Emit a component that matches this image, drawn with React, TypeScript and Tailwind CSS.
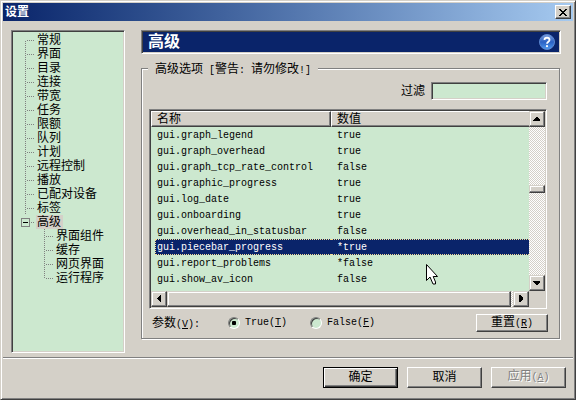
import { useState, type ReactNode } from "react";

const sunken =
  "border border-t-[#808080] border-l-[#808080] border-r-white border-b-white shadow-[inset_1px_1px_0_#404040,inset_-1px_-1px_0_#d4d0c8]";
const raised =
  "border border-t-white border-l-white border-r-[#404040] border-b-[#404040] bg-[#d4d0c8] shadow-[inset_-1px_-1px_0_#808080]";
const thumb =
  "border border-t-[#d4d0c8] border-l-[#d4d0c8] border-r-[#404040] border-b-[#404040] bg-[#d4d0c8] shadow-[inset_-1px_-1px_0_#808080,inset_1px_1px_0_#fff]";
const track =
  "bg-[repeating-conic-gradient(#fff_0_25%,#d4d0c8_0_50%)] bg-[length:2px_2px]";
const vLine =
  "w-px bg-[repeating-linear-gradient(180deg,#808080_0_1px,transparent_1px_2px)]";
const hLine =
  "h-px bg-[repeating-linear-gradient(90deg,transparent_0_1px,#808080_1px_2px)]";

const pages = [
  "常规", "界面", "目录", "连接", "带宽", "任务", "限额", "队列",
  "计划", "远程控制", "播放", "已配对设备", "标签",
];
const subPages = ["界面组件", "缓存", "网页界面", "运行程序"];

const options: [string, string][] = [
  ["gui.graph_legend", "true"],
  ["gui.graph_overhead", "true"],
  ["gui.graph_tcp_rate_control", "false"],
  ["gui.graphic_progress", "true"],
  ["gui.log_date", "true"],
  ["gui.onboarding", "true"],
  ["gui.overhead_in_statusbar", "false"],
  ["gui.piecebar_progress", "*true"],
  ["gui.report_problems", "*false"],
  ["gui.show_av_icon", "false"],
];

function Latin({ children }: { children: ReactNode }) {
  return <span className="whitespace-pre text-[10px]">{children}</span>;
}

function Arrow({ points }: { points: string }) {
  return (
    <svg width="8" height="8" viewBox="0 0 8 8" shapeRendering="crispEdges" aria-hidden="true">
      <polygon points={points} fill="#000" />
    </svg>
  );
}

function ScrollButton({ label, points }: { label: string; points: string }) {
  return (
    <button type="button" aria-label={label} className={`flex size-4 shrink-0 items-center justify-center ${thumb}`}>
      <Arrow points={points} />
    </button>
  );
}

function Tree() {
  return (
    <nav aria-label="设置" className={`min-h-[323px] w-[114px] shrink-0 bg-[#cce8cf] px-px pt-0.5 ${sunken}`}>
      <ul>
        {pages.map((name, i) => (
          <li key={name} className="flex h-3.5 items-center pl-3 whitespace-nowrap">
            <span className={`${vLine} ${i === 0 ? "h-1.5 self-end" : "h-3.5"}`} />
            <span className={`w-2 ${hLine}`} />
            <span className="ml-0.5 h-3.5 px-px leading-4">{name}</span>
          </li>
        ))}
        <li>
          <div className="flex h-3.5 items-center pl-2">
            <button
              type="button"
              aria-label="折叠"
              className="flex size-[9px] items-center justify-center border border-[#808080]"
            >
              <span className="h-px w-[5px] bg-black" />
            </button>
            <span className={`w-1 ${hLine}`} />
            <span className="ml-0.5 h-3.5 bg-[#d4d0c8] pr-0.5 pl-px leading-4">高级</span>
          </div>
          <ul>
            {subPages.map((name, i) => (
              <li key={name} className="flex h-3.5 items-center pl-[31px] whitespace-nowrap">
                <span className={`${vLine} ${i === subPages.length - 1 ? "h-2 self-start" : "h-3.5"}`} />
                <span className={`w-2 ${hLine}`} />
                <span className="ml-0.5 h-3.5 px-px leading-4">{name}</span>
              </li>
            ))}
          </ul>
        </li>
      </ul>
    </nav>
  );
}

function OptionsList() {
  const [selected, setSelected] = useState(7);
  return (
    <div className={`grid grid-cols-[minmax(0,1fr)_16px] bg-[#cce8cf] p-px ${sunken}`}>
      <div className="h-[180px] overflow-hidden">
        <table className="w-full table-fixed border-separate border-spacing-0 text-left">
          <thead>
            <tr className="h-4">
              <th className={`w-[180px] p-0 pl-[5px] font-normal ${raised}`}>
                <div className="h-3.5 leading-4">名称</div>
              </th>
              <th className="border-t border-b border-l border-white border-b-[#404040] bg-[#d4d0c8] p-0 pl-[5px] font-normal shadow-[inset_0_-1px_0_#808080]">
                <div className="h-3.5 leading-4">数值</div>
              </th>
            </tr>
          </thead>
          <tbody>
            {options.map(([name, value], i) => {
              const on = i === selected;
              return (
                <tr key={name} className="h-4 text-[10px]" onClick={() => setSelected(i)}>
                  <td className="p-0 pl-1">
                    <div
                      className={`h-4 border-y border-l border-dotted pl-px leading-4 ${on ? "border-[#f5db95] bg-[#0a246a] text-white" : "border-transparent"}`}
                    >
                      {name}
                    </div>
                  </td>
                  <td className="p-0">
                    <div
                      className={`h-4 border-y border-dotted pl-1.5 leading-4 ${on ? "border-[#f5db95] bg-[#0a246a] text-white" : "border-transparent"}`}
                    >
                      {value}
                    </div>
                  </td>
                </tr>
              );
            })}
          </tbody>
        </table>
      </div>
      <div className={`flex flex-col ${track}`}>
        <ScrollButton label="向上" points="0,6 0,5 3,2 4,2 7,5 7,6" />
        <div className="h-[58px]" />
        <div className={`h-2 ${thumb}`} />
        <div className="flex-1" />
        <ScrollButton label="向下" points="0,2 7,2 7,3 4,6 3,6 0,3" />
      </div>
      <div className={`flex h-4 ${track}`}>
        <ScrollButton label="向左" points="6,0 5,0 2,3 2,4 5,7 6,7" />
        <div className={`mr-0.5 flex-1 ${thumb}`} />
        <ScrollButton label="向右" points="2,0 3,0 6,3 6,4 3,7 2,7" />
      </div>
      <div className="bg-[#d4d0c8]" />
    </div>
  );
}

function Radio({ value, letter, checked, onChange }: { value: string; letter: string; checked: boolean; onChange: () => void }) {
  return (
    <label className="flex w-[82px] items-center gap-[5px]">
      <input
        type="radio"
        name="value"
        checked={checked}
        onChange={onChange}
        className="size-3 appearance-none rounded-full border border-t-[#808080] border-r-white border-b-white border-l-[#808080] bg-[#cce8cf] shadow-[inset_1px_1px_0_#404040] checked:bg-[radial-gradient(circle,#000_2px,transparent_2.5px)]"
      />
      <Latin>
        {value}(<u>{letter}</u>)
      </Latin>
    </label>
  );
}

export default function App() {
  const [value, setValue] = useState(true);
  return (
    <div className="relative flex min-h-screen flex-col border border-t-[#d4d0c8] border-r-[#404040] border-b-[#404040] border-l-[#d4d0c8] bg-[#d4d0c8] p-0.5 font-['Liberation_Mono','Noto_Sans_CJK_SC',monospace] text-[12px] leading-[14px] text-black shadow-[inset_1px_1px_0_#fff,inset_-1px_-1px_0_#808080]">
      <header className="flex h-[18px] items-center justify-between bg-linear-to-r from-[#0a246a] to-[#a6caf0] px-0.5 text-white">
        <h1 className="pt-0.5 font-bold">设置</h1>
        <button type="button" aria-label="关闭" className={`flex h-3.5 w-4 items-center justify-center ${raised}`}>
          <svg width="8" height="7" viewBox="0 0 8 7" shapeRendering="crispEdges" aria-hidden="true">
            <path
              d="M0 0h2v1h-2zM6 0h2v1h-2zM1 1h2v1h-2zM5 1h2v1h-2zM2 2h4v1h-4zM3 3h2v1h-2zM2 4h4v1h-4zM1 5h2v1h-2zM5 5h2v1h-2zM0 6h2v1h-2zM6 6h2v1h-2z"
              fill="#000"
            />
          </svg>
        </button>
      </header>

      <div className="flex gap-4 pt-[9px] pr-3 pl-2">
        <Tree />
        <main className="min-w-0 flex-1">
          <div className="flex h-6 items-center justify-between border border-t-[#808080] border-r-white border-b-white border-l-[#808080] bg-[#0a246a] pr-[5px] pl-1.5 text-white shadow-[inset_1px_1px_0_#404040,inset_-1px_-1px_0_#d4d0c8]">
            <h2 className="pt-0.5 text-[16px] leading-5 font-bold">高级</h2>
            <button type="button" aria-label="帮助">
              <svg width="16" height="16" viewBox="0 0 16 16" aria-hidden="true">
                <defs>
                  <linearGradient id="help" x1="0" y1="0" x2="0" y2="1">
                    <stop offset="0" stopColor="#7fa0dc" />
                    <stop offset="0.5" stopColor="#2c62c4" />
                    <stop offset="1" stopColor="#4f9af0" />
                  </linearGradient>
                </defs>
                <circle cx="8" cy="8" r="7.5" fill="url(#help)" stroke="#5b86cf" />
                <path d="M5.5 6C5.5 3 10.5 3 10.5 6C10.5 7.7 8 7.7 8 9.8" fill="none" stroke="#fff" strokeWidth="1.8" />
                <circle cx="8" cy="12.2" r="1.1" fill="#fff" />
              </svg>
            </button>
          </div>

          <fieldset className="mt-[7px] mr-px min-w-0 border border-[#808080] pr-3 pb-1.5 pl-[7px] shadow-[1px_1px_0_#fff,inset_1px_1px_0_#fff]">
            <legend className="-ml-px h-3.5 bg-[#d4d0c8] px-[7px] leading-[18px] whitespace-nowrap">
              高级选项<Latin> [</Latin>警告<Latin>: </Latin>请勿修改<Latin>!]</Latin>
            </legend>
            <div className="mt-[7px] flex items-center justify-end gap-1.5">
              <label htmlFor="filter" className="pt-0.5">过滤</label>
              <input id="filter" type="text" className={`h-[18px] w-[116px] bg-[#cce8cf] px-1 outline-none ${sunken}`} />
            </div>
            <div className="mt-[9px]">
              <OptionsList />
            </div>
            <div className="-mr-px mt-[5px] flex h-[18px] items-center pl-[3px]">
              <span className="w-[76px] pt-0.5">
                参数<Latin>(<u>V</u>):</Latin>
              </span>
              <Radio value="True" letter="T" checked={value} onChange={() => setValue(true)} />
              <Radio value="False" letter="F" checked={!value} onChange={() => setValue(false)} />
              <button type="button" className={`ml-auto h-[18px] w-[72px] ${raised}`}>
                重置<Latin>(<u>R</u>)</Latin>
              </button>
            </div>
          </fieldset>
        </main>
      </div>

      <hr className="mt-1 h-0.5 border-t border-b border-t-[#808080] border-b-white" />

      <footer className="flex justify-end gap-[9px] py-2 pr-[7px]">
        <button type="button" className="h-[21px] w-[75px] border border-black bg-[#d4d0c8] shadow-[inset_1px_1px_0_#fff,inset_-1px_-1px_0_#404040,inset_-2px_-2px_0_#808080]">
          确定
        </button>
        <button type="button" className={`h-[21px] w-[75px] ${raised}`}>
          取消
        </button>
        <button type="button" disabled className={`h-[21px] w-[75px] text-[#808080] [text-shadow:1px_1px_0_#fff] ${raised}`}>
          应用<Latin>(<u>A</u>)</Latin>
        </button>
      </footer>

      <svg className="pointer-events-none absolute top-[262px] left-[424px]" width="13" height="22" viewBox="0 0 13 22" aria-hidden="true">
        <path
          d="M1.5 1.5V17.5L5 14L8 21H10.5V19L8.2 13.5H12.5Z"
          fill="#fff"
          stroke="#000"
        />
      </svg>
    </div>
  );
}
